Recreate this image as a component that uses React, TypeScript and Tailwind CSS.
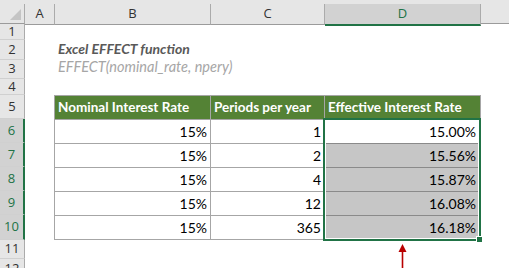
import React from 'react';

const cellFont = "font-['Lato',sans-serif]";
const hdrFont = "font-['Open_Sans',sans-serif]";

const data = [
  { rate: '15%', n: '1', eff: '15.00%', row: 'row-start-7' },
  { rate: '15%', n: '2', eff: '15.56%', row: 'row-start-8' },
  { rate: '15%', n: '4', eff: '15.87%', row: 'row-start-9' },
  { rate: '15%', n: '12', eff: '16.08%', row: 'row-start-10' },
  { rate: '15%', n: '365', eff: '16.18%', row: 'row-start-11' },
];

const ColHeader: React.FC<{ label: string; active?: boolean; className?: string }> = ({ label, active, className = '' }) => (
  <div className="bg-[#e6e6e6] pt-[4px] flex flex-col">
    <div
      className={`flex-1 flex items-center justify-center text-[13px] ${hdrFont} ${className} ${
        active ? 'bg-[#d2d2d2] text-[#217346] border-b-2 border-b-[#217346]' : 'text-[#333] border-b border-b-[#9b9b9b]'
      }`}
    >
      {label}
    </div>
  </div>
);

const RowHeader: React.FC<{ n: number; active?: boolean }> = ({ n, active }) => (
  <div
    className={`col-start-1 flex items-center justify-center text-[13px] ${hdrFont} border-b border-[#d0d0d0] ${
      active
        ? 'bg-[#d2d2d2] text-[#217346] border-r-2 border-r-[#217346]'
        : 'bg-[#e6e6e6] text-[#333] border-r border-r-[#ababab]'
    }`}
  >
    {n}
  </div>
);

export default function App() {
  return (
    <div className="relative w-[509px] h-[268px] overflow-hidden bg-white">
      <div className="grid grid-cols-[25px_29px_157px_114px_156px_1fr] grid-rows-[24px_16px_20px_19px_16px_24px_24px_24px_24px_24px_25px_19px_20px]">
        {/* column headers */}
        <div className="bg-[#e6e6e6] pt-[4px] flex flex-col">
          <div className="flex-1 border-r border-[#ababab] border-b border-b-[#9b9b9b] relative">
            <svg className="absolute right-[3px] bottom-[3px]" width="11" height="11" viewBox="0 0 11 11">
              <polygon points="11,0 11,11 0,11" fill="#c4c4c4" />
            </svg>
          </div>
        </div>
        <ColHeader label="A" />
        <ColHeader label="B" className="border-l border-l-[#ababab] border-r border-r-[#ababab]" />
        <ColHeader label="C" className="border-r border-r-[#ababab]" />
        <ColHeader label="D" active className="border-r border-r-[#ababab]" />
        <ColHeader label="" />

        {/* row 1 */}
        <RowHeader n={1} />
        <div className="col-span-5" />

        {/* row 2 */}
        <RowHeader n={2} />
        <div />
        <div className="col-span-4 flex items-end pl-[4px] pb-[1px] text-[14px] font-bold italic text-[#595959] font-['Liberation_Sans_Narrow','Lato',sans-serif]">
          Excel EFFECT function
        </div>

        {/* row 3 */}
        <RowHeader n={3} />
        <div />
        <div className={`col-span-4 flex items-end pl-[4px] pb-[1px] text-[14.5px] italic text-[#a6a6a6] ${cellFont}`}>
          EFFECT(nominal_rate, npery)
        </div>

        {/* row 4 */}
        <RowHeader n={4} />
        <div className="col-span-5" />

        {/* row 5: table header */}
        <RowHeader n={5} />
        <div />
        {['Nominal Interest Rate', 'Periods per year', 'Effective Interest Rate'].map((h, i) => (
          <div
            key={h}
            className={`bg-[#548235] border-t border-r border-[#a6a6a6] ${i === 0 ? 'border-l' : ''} flex items-end pl-[3px] pb-[2px] text-[13.5px] font-bold text-white whitespace-nowrap ${cellFont}`}
          >
            {h}
          </div>
        ))}
        <div />

        {/* data rows */}
        {data.map((r, i) => {
          const last = i === data.length - 1;
          return (
            <React.Fragment key={i}>
              <RowHeader n={6 + i} active />
              <div />
              <div
                className={`border-l border-t border-r border-[#a6a6a6] ${last ? 'border-b' : ''} flex items-end justify-end pr-[3px] pb-[1px] text-[14px] text-black ${cellFont}`}
              >
                {r.rate}
              </div>
              <div
                className={`border-t border-r border-[#a6a6a6] ${last ? 'border-b' : ''} flex items-end justify-end pr-[3px] pb-[1px] text-[14px] text-black ${cellFont}`}
              >
                {r.n}
              </div>
              <div
                className={`col-start-5 ${r.row} border-t border-r ${
                  i === 0 ? 'bg-white border-[#a6a6a6]' : 'bg-[#c6c6c6] border-t-[#8a8a8a] border-r-[#a6a6a6]'
                } ${last ? 'border-b' : ''} flex items-end justify-end pr-[4px] pb-[1px] text-[14px] text-black ${cellFont}`}
              >
                {r.eff}
              </div>
              <div className="col-start-6" />
            </React.Fragment>
          );
        })}

        {/* selection outline D6:D10 */}
        <div className="col-start-5 row-start-7 row-span-5 -ml-[2px] -mt-[1px] -mb-[1px] border-2 border-[#217346] shadow-[inset_0_0_0_1px_white] relative pointer-events-none">
          <div className="absolute -right-[4px] -bottom-[4px] w-[7px] h-[7px] bg-[#217346] border border-white" />
        </div>

        {/* rows 11, 12 */}
        <RowHeader n={11} />
        <div className="col-span-5" />
        <RowHeader n={12} />
        <div className="col-span-5" />
      </div>

      {/* annotation arrow */}
      <svg className="absolute left-[398px] top-[244px]" width="9" height="24" viewBox="0 0 9 24">
        <polygon points="4.5,0 8.5,8 0.5,8" fill="#b80000" />
        <rect x="3.7" y="7" width="1.6" height="17" fill="#b80000" />
      </svg>
    </div>
  );
}
